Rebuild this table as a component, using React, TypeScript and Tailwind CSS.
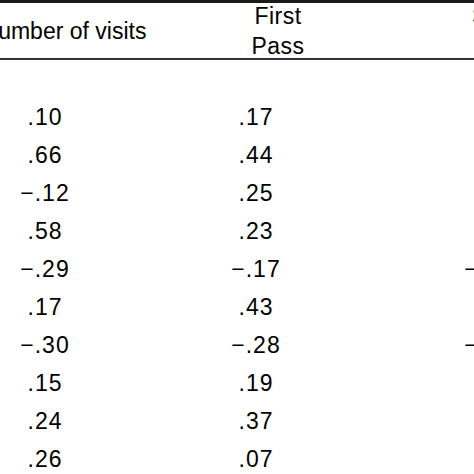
const rows = [
  [".10", ".17", ""],
  [".66", ".44", ""],
  ["−.12", ".25", ""],
  [".58", ".23", ""],
  ["−.29", "−.17", "−.29"],
  [".17", ".43", ""],
  ["−.30", "−.28", "−.30"],
  [".15", ".19", ""],
  [".24", ".37", ""],
  [".26", ".07", ""],
];

// column widths and the right padding that pulls the numbers left of the header centre
const cols = ["w-[212px] pr-[38px]", "w-[216px] pr-[44px]", "w-[250px] pr-[44px]"];
const heads = ["w-[212px]", "w-[216px]", "w-[250px]"];

export default function App() {
  return (
    <div className="w-[474px] h-[474px] overflow-hidden bg-white text-[23px] text-black font-['Liberation_Sans',Arial,sans-serif]">
      <div className="ml-[-42px] w-[678px]">
        <div className="flex h-[60px] pt-px border-t-[3px] border-b-2 border-t-[#1a1a1a] border-b-[#333]">
          <div className={`${heads[0]} flex shrink-0 items-center justify-center whitespace-nowrap leading-[30px]`}>
            Number of visits
          </div>
          <div className={`${heads[1]} flex shrink-0 items-center justify-center text-center leading-[30px] tracking-[0.5px]`}>
            First
            <br />
            Pass
          </div>
          <div className={`${heads[2]} flex shrink-0 items-center justify-center text-center leading-[30px]`}>
            Second
            <br />
            Pass
          </div>
        </div>
        <div className="h-[38px]" />
        {rows.map((row, i) => (
          <div key={i} className="flex h-[38px] leading-[38px] tracking-[1px]">
            {row.map((v, j) => (
              <div key={j} className={`${cols[j]} shrink-0 text-center`}>
                {v}
              </div>
            ))}
          </div>
        ))}
      </div>
    </div>
  );
}
